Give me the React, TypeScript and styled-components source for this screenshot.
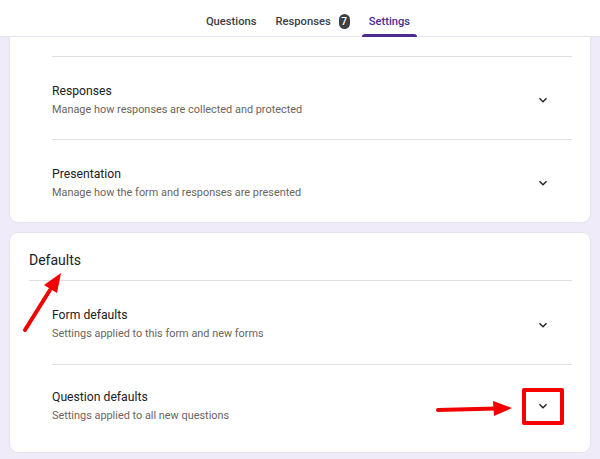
import React from "react";
import styled, { createGlobalStyle } from "styled-components";

const Global = createGlobalStyle`
  html, body { margin: 0; padding: 0; }
  body {
    background: #f0ebf8;
    font-family: Roboto, "Noto Sans", Arial, sans-serif;
    width: 600px;
    height: 459px;
    overflow: hidden;
  }
`;

const Page = styled.div`
  position: relative;
  width: 600px;
  height: 459px;
  overflow: hidden;
  background: #f0ebf8;
  display: flex;
  flex-direction: column;
`;

const TopBar = styled.div`
  flex-shrink: 0;
  height: 37px;
  box-sizing: border-box;
  background: #fff;
  border-bottom: 1px solid #e3e3e6;
  display: flex;
  justify-content: center;
  align-items: stretch;
  gap: 5px;
  padding-left: 16px;
  padding-top: 7px;
`;

const Tab = styled.div<{ $active?: boolean }>`
  position: relative;
  display: flex;
  align-items: center;
  gap: 8px;
  padding: 0 7px;
  font-size: 11.2px;
  font-weight: 500;
  color: ${(p) => (p.$active ? "#4b2b93" : "#3c4043")};
  &::after {
    content: "";
    display: ${(p) => (p.$active ? "block" : "none")};
    position: absolute;
    left: 0;
    right: 0;
    bottom: -1px;
    height: 3px;
    border-radius: 3px 3px 0 0;
    background: #4b2b93;
  }
`;

const Badge = styled.span`
  display: inline-flex;
  align-items: center;
  justify-content: center;
  width: 11px;
  height: 15px;
  border-radius: 6px;
  background: #3c4043;
  color: #fff;
  font-size: 10px;
  font-weight: 500;
`;

const Content = styled.div`
  flex-shrink: 0;
  display: flex;
  flex-direction: column;
  gap: 11px;
  padding: 0 10px;
`;

const Card = styled.div<{ $cutTop?: boolean }>`
  flex-shrink: 0;
  background: #fff;
  border-radius: ${(p) => (p.$cutTop ? "0 0 8px 8px" : "8px")};
  box-shadow: 0 0 0 1px #e6e3ec;
  padding: ${(p) => (p.$cutTop ? "19px" : "0")} 18px 0 0;
  display: flex;
  flex-direction: column;
`;

const CardHeader = styled.div`
  margin-left: 19px;
  height: 48px;
  display: flex;
  align-items: center;
  padding-top: 6px;
  box-sizing: border-box;
  font-size: 14px;
  color: #202124;
  border-bottom: 1px solid #e0e0e0;
`;

const Row = styled.div<{ $last?: boolean; $first?: boolean }>`
  margin-left: 42px;
  box-sizing: border-box;
  height: ${(p) => (p.$last ? "88px" : "83px")};
  border-top: ${(p) => (p.$first ? "none" : "1px solid #e0e0e0")};
  display: flex;
  align-items: center;
  justify-content: space-between;
  padding-top: 4px;
  padding-bottom: ${(p) => (p.$last ? "9px" : "0")};
`;

const RowText = styled.div`
  display: flex;
  flex-direction: column;
  gap: 3px;
`;

const RowTitle = styled.div`
  font-size: 12.2px;
  color: #202124;
  line-height: 15px;
`;

const RowSub = styled.div`
  font-size: 10.9px;
  color: #6a6560;
  line-height: 15px;
`;

const ChevronBox = styled.div`
  position: relative;
  width: 42px;
  height: 37px;
  margin-right: 8px;
  display: flex;
  align-items: center;
  justify-content: center;
`;

const Highlight = styled.div`
  position: absolute;
  inset: 0;
  border: 4px solid #f60000;
  border-radius: 2px;
  box-sizing: border-box;
`;

const Overlay = styled.svg`
  position: absolute;
  left: 0;
  top: 0;
  pointer-events: none;
`;

const Chevron = () => (
  <svg width="16" height="16" viewBox="0 0 24 24">
    <path d="M16.59 8.59L12 13.17 7.41 8.59 6 10l6 6 6-6z" fill="#202124" />
  </svg>
);

const SettingRow = ({
  title,
  sub,
  last,
  highlight,
  first,
}: {
  title: string;
  sub: string;
  last?: boolean;
  first?: boolean;
  highlight?: boolean;
}) => (
  <Row $last={last} $first={first}>
    <RowText>
      <RowTitle>{title}</RowTitle>
      <RowSub>{sub}</RowSub>
    </RowText>
    <ChevronBox>
      <Chevron />
      {highlight && <Highlight />}
    </ChevronBox>
  </Row>
);

export default function App() {
  return (
    <>
      <Global />
      <Page>
        <TopBar>
          <Tab>Questions</Tab>
          <Tab>
            Responses <Badge>7</Badge>
          </Tab>
          <Tab $active>Settings</Tab>
        </TopBar>
        <Content>
          <Card $cutTop>
            <SettingRow
              title="Responses"
              sub="Manage how responses are collected and protected"
            />
            <SettingRow
              title="Presentation"
              sub="Manage how the form and responses are presented"
            />
          </Card>
          <Card>
            <CardHeader>Defaults</CardHeader>
            <SettingRow
              first
              title="Form defaults"
              sub="Settings applied to this form and new forms"
            />
            <SettingRow
              title="Question defaults"
              sub="Settings applied to all new questions"
              last
              highlight
            />
          </Card>
        </Content>
        <Overlay width="600" height="459" viewBox="0 0 600 459">
          <line x1="25" y1="330" x2="50" y2="290" stroke="#f20000" strokeWidth="4" strokeLinecap="round" />
          <polygon points="61,273 44,285 57,293" fill="#f20000" />
          <line x1="438" y1="410" x2="496" y2="408.5" stroke="#f20000" strokeWidth="4" strokeLinecap="round" />
          <polygon points="512,408 493,401 494,416" fill="#f20000" />
        </Overlay>
      </Page>
    </>
  );
}
